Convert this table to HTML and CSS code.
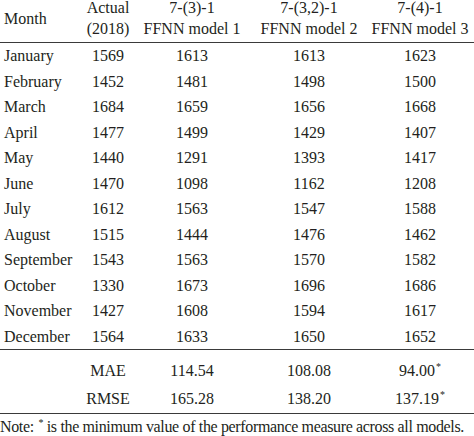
FILE: index.html
```html
<!DOCTYPE html>
<html lang="en">
<head>
<meta charset="utf-8">
<title>FFNN model comparison</title>
<link rel="stylesheet" href="styles.css">
</head>
<body>
<div class="page">
<table class="results">
  <colgroup>
    <col class="c-month">
    <col class="c-actual">
    <col class="c-m1">
    <col class="c-m2">
    <col class="c-m3">
  </colgroup>
  <thead>
    <tr>
      <th class="left">Month</th>
      <th>Actual<br>(2018)</th>
      <th>7-(3)-1<br>FFNN model 1</th>
      <th>7-(3,2)-1<br>FFNN model 2</th>
      <th>7-(4)-1<br>FFNN model 3</th>
    </tr>
  </thead>
  <tbody class="months">
    <tr><td class="left">January</td><td>1569</td><td>1613</td><td>1613</td><td>1623</td></tr>
    <tr><td class="left">February</td><td>1452</td><td>1481</td><td>1498</td><td>1500</td></tr>
    <tr><td class="left">March</td><td>1684</td><td>1659</td><td>1656</td><td>1668</td></tr>
    <tr><td class="left">April</td><td>1477</td><td>1499</td><td>1429</td><td>1407</td></tr>
    <tr><td class="left">May</td><td>1440</td><td>1291</td><td>1393</td><td>1417</td></tr>
    <tr><td class="left">June</td><td>1470</td><td>1098</td><td>1162</td><td>1208</td></tr>
    <tr><td class="left">July</td><td>1612</td><td>1563</td><td>1547</td><td>1588</td></tr>
    <tr><td class="left">August</td><td>1515</td><td>1444</td><td>1476</td><td>1462</td></tr>
    <tr><td class="left">September</td><td>1543</td><td>1563</td><td>1570</td><td>1582</td></tr>
    <tr><td class="left">October</td><td>1330</td><td>1673</td><td>1696</td><td>1686</td></tr>
    <tr><td class="left">November</td><td>1427</td><td>1608</td><td>1594</td><td>1617</td></tr>
    <tr><td class="left">December</td><td>1564</td><td>1633</td><td>1650</td><td>1652</td></tr>
  </tbody>
  <tbody class="summary">
    <tr class="first"><td></td><td>MAE</td><td>114.54</td><td>108.08</td><td>94.00<sup>*</sup></td></tr>
    <tr><td></td><td>RMSE</td><td>165.28</td><td>138.20</td><td>137.19<sup>*</sup></td></tr>
  </tbody>
</table>
<p class="note">Note: <sup>*</sup> is the minimum value of the performance measure across all models.</p>
</div>
</body>
</html>
```

FILE: styles.css
```css
html, body {
  margin: 0;
  padding: 0;
  background: #ffffff;
}

.page {
  width: 474px;
  height: 436px;
  overflow: hidden;
  font-family: "Liberation Serif", "Times New Roman", serif;
  font-size: 16px;
  color: #231f20;
}

.results {
  width: 474px;
  table-layout: fixed;
  border-collapse: collapse;
  margin-top: -3px;
}

.c-month { width: 84px; }
.c-actual { width: 48px; }
.c-m1 { width: 120px; }
.c-m2 { width: 114px; }
.c-m3 { width: 108px; }

.results th,
.results td {
  padding: 0;
  text-align: center;
  font-weight: normal;
  white-space: nowrap;
}

.results th {
  line-height: 21px;
  padding-bottom: 3px;
  vertical-align: middle;
}

.results .left {
  text-align: left;
  padding-left: 4px;
}

.results thead {
  border-bottom: 1.5px solid #3a3a3a;
}

.months td {
  height: 25.5px;
  line-height: 25.5px;
}

.months {
  border-bottom: 1.5px solid #3a3a3a;
}

.summary td {
  height: 28px;
  line-height: 28px;
}

.summary .first td {
  padding-top: 7px;
}

.summary {
  border-bottom: 1.5px solid #3a3a3a;
}

sup {
  font-size: 10px;
  line-height: 0;
  vertical-align: 6px;
  margin-left: 1px;
}

.note {
  margin: 0;
  line-height: 26px;
  white-space: nowrap;
  letter-spacing: -0.35px;
}
```
